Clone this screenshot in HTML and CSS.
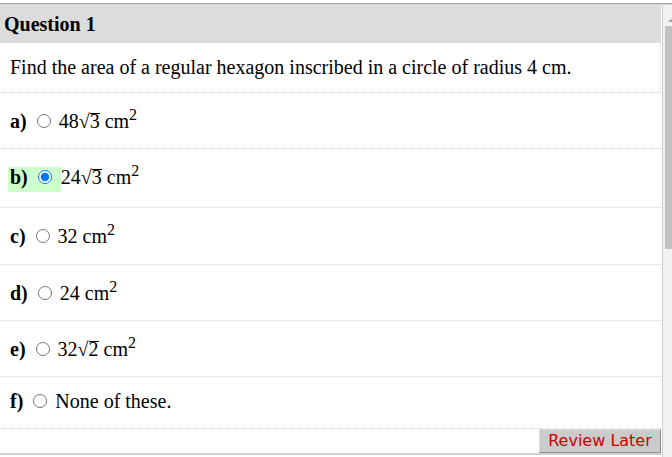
FILE: index.html
```html
<!DOCTYPE html>
<html>
<head>
<meta charset="utf-8">
<link rel="stylesheet" href="styles.css">
</head>
<body>
<div class="frame">
  <div class="main">
    <div class="content">
      <div class="header">Question 1</div>
      <div class="question">Find the area of a regular hexagon inscribed in a circle of radius 4 cm.</div>
      <div class="option tall"><span class="lbl">a) <input type="radio" name="q1"> </span>48√<span class="ov">3</span> cm<sup>2</sup></div>
      <div class="option tall"><span class="lbl hl">b) <input type="radio" name="q1" checked></span>24√<span class="ov">3</span> cm<sup>2</sup></div>
      <div class="option tall"><span class="lbl">c) <input type="radio" name="q1"> </span>32 cm<sup>2</sup></div>
      <div class="option tall"><span class="lbl">d) <input type="radio" name="q1"> </span>24 cm<sup>2</sup></div>
      <div class="option tall"><span class="lbl">e) <input type="radio" name="q1"> </span>32√<span class="ov">2</span> cm<sup>2</sup></div>
      <div class="option"><span class="lbl">f) <input type="radio" name="q1"> </span>None of these.</div>
      <div class="actions"><button class="review">Review Later</button></div>
    </div>
    <div class="gap"></div>
    <div class="scroll">
      <div class="arrow"></div>
      <div class="thumb"></div>
    </div>
  </div>
</div>
</body>
</html>
```

FILE: styles.css
```css
html, body {
  margin: 0;
  padding: 0;
  background: #fff;
}
body {
  font-family: "Liberation Serif", "Times New Roman", serif;
  font-size: 20px;
  color: #000;
  width: 672px;
  height: 457px;
  overflow: hidden;
}
.frame {
  margin-top: 3px;
  border-top: 1px solid #a2a2a2;
}
.main {
  display: flex;
  border-top: 1px solid #d8d8d8;
  height: 452px;
}
.content {
  width: 661px;
  flex: none;
  align-self: flex-start;
  border-bottom: 2px solid #d0d0d0;
}
.gap {
  width: 1px;
  flex: none;
}
.scroll {
  flex: 1;
  background: #f1f1f1;
  border-left: 1px solid #cfcfcf;
  position: relative;
}
.arrow {
  position: absolute;
  top: 14px;
  left: 5px;
  width: 0;
  height: 0;
  border-left: 3px solid transparent;
  border-right: 3px solid transparent;
  border-bottom: 3px solid #a3a3a3;
}
.thumb {
  margin: 21px 0 0 2px;
  width: 7px;
  height: 223px;
  background: #c1c1c1;
}
.header {
  background: #dcdcdc;
  height: 37px;
  line-height: 37px;
  padding: 1px 0 0 4px;
  font-weight: bold;
}
.question {
  padding: 13px 10px 13px 10px;
  line-height: 23px;
  border-bottom: 1px dotted #d6d6d6;
  border-right: 1px dotted #d6d6d6;
}
.option {
  padding: 13px 10px 15px 10px;
  line-height: 23px;
  border-bottom: 1px dotted #d6d6d6;
}
.option.tall {
  padding-top: 17px;
  padding-bottom: 15.2px;
}
.lbl {
  font-weight: bold;
}
.lbl input {
  width: 14px;
  height: 14px;
  margin: 3px 3px 0 5px;
}
.hl {
  display: inline-block;
  background: #ccffcc;
  line-height: 18.5px;
  padding: 0 6px 5.5px 2px;
  margin-left: -2px;
}
.ov {
  display: inline-block;
  line-height: 15px;
  border-top: 1px solid #000;
}
sup {
  line-height: 0;
  font-size: 16px;
  vertical-align: 8px;
}
.actions {
  display: flex;
  justify-content: flex-end;
}
.review {
  width: 122px;
  height: 24px;
  padding: 0;
  background: #cbcbcb;
  border: 1px solid;
  border-color: #dedede #8c8c8c #8c8c8c #dedede;
  color: #cc0000;
  font-family: "DejaVu Sans", Verdana, sans-serif;
  font-size: 16px;
  line-height: 22px;
  text-align: center;
}
```
